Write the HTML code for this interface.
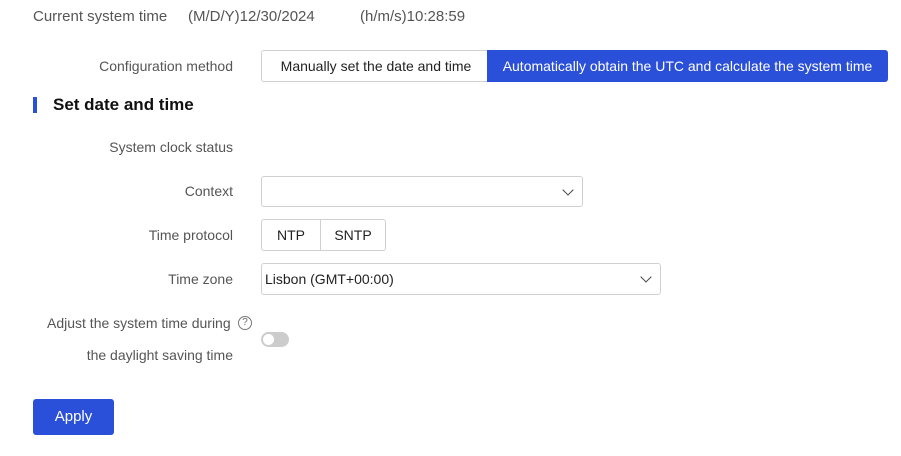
<!DOCTYPE html>
<html><head><style>
body{margin:0;width:901px;height:456px;background:#fff;font-family:"Liberation Sans",sans-serif;font-size:14px;color:#555;position:relative;overflow:hidden}
.a{position:absolute;white-space:nowrap}
.l{position:absolute;right:668px;white-space:nowrap;line-height:20px}
.box{position:absolute;border:1px solid #d0d0d0;border-radius:3px;box-sizing:border-box;background:#fff}
.chev{position:absolute;width:7px;height:7px;border-right:1.5px solid #444;border-bottom:1.5px solid #444;transform:rotate(45deg)}
</style></head><body>
<div class="a" style="left:33px;top:7px;line-height:20px;font-size:15px">Current system time</div>
<div class="a" style="left:188px;top:7px;line-height:20px;font-size:15px">(M/D/Y)12/30/2024</div>
<div class="a" style="left:360px;top:7px;line-height:20px;font-size:15px">(h/m/s)10:28:59</div>

<div class="l" style="top:56px">Configuration method</div>
<div class="box" style="left:261px;top:50px;width:230px;height:32px;border-radius:3px 0 0 3px;color:#222;text-align:center;line-height:30px">Manually set the date and time</div>
<div class="a" style="left:487px;top:50px;width:401px;height:32px;background:#2a4fd9;border-radius:0 3px 3px 0;color:#fff;text-align:center;line-height:32px">Automatically obtain the UTC and calculate the system time</div>

<div class="a" style="left:33px;top:97px;width:4px;height:16px;background:#2a4fd9"></div>
<div class="a" style="left:53px;top:94px;font-size:17px;font-weight:bold;color:#111;line-height:22px">Set date and time</div>

<div class="l" style="top:137px">System clock status</div>
<div class="l" style="top:181px">Context</div>
<div class="box" style="left:261px;top:176px;width:322px;height:31px"><div class="chev" style="left:302px;top:9px"></div></div>

<div class="l" style="top:225px">Time protocol</div>
<div class="box" style="left:261px;top:219px;width:60px;height:32px;border-radius:3px 0 0 3px;color:#222;text-align:center;line-height:30px">NTP</div>
<div class="box" style="left:320px;top:219px;width:66px;height:32px;border-radius:0 3px 3px 0;color:#222;text-align:center;line-height:30px">SNTP</div>

<div class="l" style="top:269px">Time zone</div>
<div class="box" style="left:261px;top:263px;width:400px;height:32px;color:#222;line-height:30px;padding-left:3px">Lisbon (GMT+00:00)<div class="chev" style="left:380px;top:9px"></div></div>

<div class="a" style="left:47px;top:313px;line-height:20px">Adjust the system time during</div>
<div class="a" style="left:238px;top:316px;width:12px;height:12px;border:1px solid #777;border-radius:50%;font-size:10px;line-height:12px;text-align:center;color:#666">?</div>
<div class="l" style="top:345px">the daylight saving time</div>
<div class="a" style="left:261px;top:332px;width:28px;height:15px;background:#ccc;border-radius:8px"><div style="position:absolute;left:2px;top:2px;width:11px;height:11px;border-radius:50%;background:#fff"></div></div>

<div class="a" style="left:33px;top:399px;width:81px;height:36px;background:#2a4fd9;border-radius:3px;color:#fff;text-align:center;line-height:36px;font-size:15px">Apply</div>
</body></html>
